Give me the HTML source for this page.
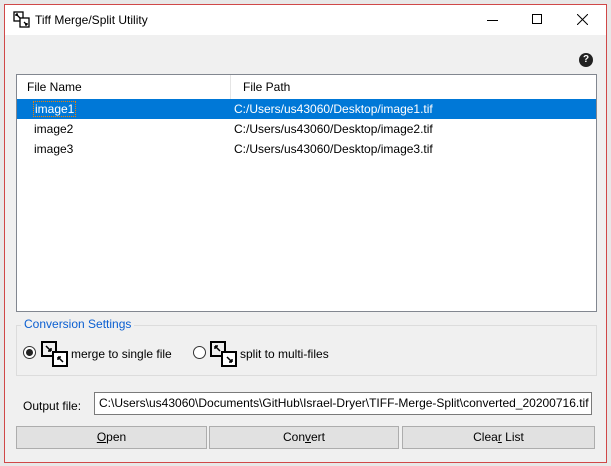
<!DOCTYPE html>
<html><head><style>
*{box-sizing:border-box;margin:0;padding:0}
body{width:611px;height:466px;background:#e8e8e8;font-family:"Liberation Sans",sans-serif;font-size:12px;color:#000;position:relative;overflow:hidden}
.win{position:absolute;left:4px;top:4px;width:603px;height:459px;border:1px solid #d04848;background:#f0f0f0}
.title{position:absolute;left:0;top:0;width:601px;height:30px;background:#fff}
.abs{position:absolute}
.list{position:absolute;left:11px;top:69px;width:581px;height:238px;border:1px solid #828790;background:#fff}
.row{position:absolute;left:0;width:579px;height:20px;line-height:20px}
.btn{position:absolute;top:421px;height:23px;border:1px solid #adadad;background:#e1e1e1;text-align:center;line-height:21px}
</style></head><body>
<div class="win">
 <div class="title">
  <svg class="abs" style="left:8px;top:6px" width="18" height="18" viewBox="0 0 18 18" fill="none" stroke="#000" stroke-width="1.3">
   <rect x="1" y="1" width="9" height="9"/><rect x="7" y="7" width="9" height="9" fill="#fff"/>
   <path d="M3 3l4 4M3 3v2M3 3h2M14 14l-3-3M14 14v-2M14 14h-2"/>
  </svg>
  <div class="abs" style="left:30px;top:8px;font-size:12px">Tiff Merge/Split Utility</div>
  <div class="abs" style="left:482px;top:15px;width:11px;height:1px;background:#000"></div>
  <div class="abs" style="left:527px;top:9px;width:10px;height:10px;border:1px solid #000"></div>
  <svg class="abs" style="left:572px;top:9px" width="11" height="11"><path d="M0 0L11 11M11 0L0 11" stroke="#000" stroke-width="1"/></svg>
 </div>
 <div class="abs" style="left:574px;top:48px;width:14px;height:14px;border-radius:50%;background:#222;color:#fff;font-size:10px;font-weight:bold;text-align:center;line-height:14px">?</div>
 <div class="list">
  <div class="row" style="top:0;height:24px;line-height:24px">
   <span class="abs" style="left:10px">File Name</span>
   <span class="abs" style="left:213px;top:0;width:1px;height:24px;background:#e5e5e5"></span>
   <span class="abs" style="left:226px">File Path</span>
  </div>
  <div class="row" style="top:24px;background:#0078d7;color:#fff">
   <span class="abs" style="left:16px;top:2px;height:16px;line-height:14px;border:1px dotted #f08000;padding:0 1px">image1</span>
   <span class="abs" style="left:217px">C:/Users/us43060/Desktop/image1.tif</span>
  </div>
  <div class="row" style="top:44px"><span class="abs" style="left:17px">image2</span><span class="abs" style="left:217px">C:/Users/us43060/Desktop/image2.tif</span></div>
  <div class="row" style="top:64px"><span class="abs" style="left:17px">image3</span><span class="abs" style="left:217px">C:/Users/us43060/Desktop/image3.tif</span></div>
 </div>
 <div class="abs" style="left:11px;top:320px;width:581px;height:51px;border:1px solid #dcdcdc"></div>
 <div class="abs" style="left:16px;top:312px;padding:0 3px;background:#f0f0f0;color:#0b5fd1">Conversion Settings</div>
 <div class="abs" style="left:18px;top:341px;width:13px;height:13px;border:1px solid #333;border-radius:50%;background:#fff"><div style="margin:2px;width:7px;height:7px;border-radius:50%;background:#222"></div></div>
 <svg class="abs" style="left:36px;top:336px" width="28" height="26" viewBox="0 0 28 26" fill="none" stroke="#000" stroke-width="2">
  <rect x="1" y="1" width="14" height="14"/><rect x="12" y="11" width="14" height="14" fill="#fff"/>
  <path d="M5 5l5 5M10 10h-3M10 10v-3M22 21l-5-5M17 16h3M17 16v3" stroke-width="1.5"/>
 </svg>
 <div class="abs" style="left:66px;top:342px">merge to single file</div>
 <div class="abs" style="left:188px;top:341px;width:13px;height:13px;border:1px solid #333;border-radius:50%;background:#fff"></div>
 <svg class="abs" style="left:205px;top:336px" width="28" height="26" viewBox="0 0 28 26" fill="none" stroke="#000" stroke-width="2">
  <rect x="1" y="1" width="14" height="14"/><rect x="12" y="11" width="14" height="14" fill="#fff"/>
  <path d="M5 5l5 5M5 5h3M5 5v3M22 21l-5-5M22 21h-3M22 21v-3" stroke-width="1.5"/>
 </svg>
 <div class="abs" style="left:235px;top:342px">split to multi-files</div>
 <div class="abs" style="left:18px;top:394px">Output file:</div>
 <div class="abs" style="left:89px;top:387px;width:498px;height:23px;border:1px solid #7a7a7a;background:#fff;padding-left:4px;line-height:21px;white-space:nowrap;overflow:hidden">C:\Users\us43060\Documents\GitHub\Israel-Dryer\TIFF-Merge-Split\converted_20200716.tif</div>
 <div class="btn" style="left:11px;width:191px"><u>O</u>pen</div>
 <div class="btn" style="left:204px;width:190px">Con<u>v</u>ert</div>
 <div class="btn" style="left:397px;width:193px">Clea<u>r</u> List</div>
</div>
</body></html>
